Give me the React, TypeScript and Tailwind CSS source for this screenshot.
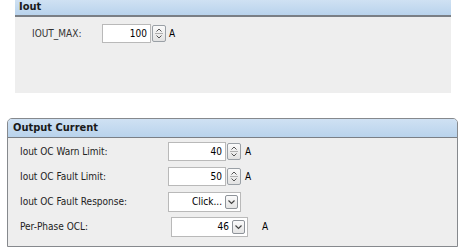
import React from "react";

function Spinner() {
    return (
        <div className="w-[14px] h-[17px] border border-[#9aa0a6] rounded-[2px] bg-gradient-to-b from-[#fafafa] to-[#e2e2e2] flex flex-col items-center justify-center ml-[1px]">
            <svg width="10" height="15" viewBox="0 0 10 15">
                <path d="M2.5 5.5 L5 3 L7.5 5.5" fill="none" stroke="#555" strokeWidth="1" />
                <line x1="1" y1="7.5" x2="9" y2="7.5" stroke="#b0b0b0" strokeWidth="1" />
                <path d="M2.5 9.5 L5 12 L7.5 9.5" fill="none" stroke="#555" strokeWidth="1" />
            </svg>
        </div>
    );
}

function DropButton() {
    return (
        <div className="w-[13px] h-[14px] border border-[#8e9399] rounded-[2px] bg-gradient-to-b from-[#fbfbfb] to-[#e4e4e4] flex items-center justify-center">
            <svg width="9" height="8" viewBox="0 0 9 8">
                <path d="M1.5 2.5 L4.5 5.5 L7.5 2.5" fill="none" stroke="#444" strokeWidth="1.2" />
            </svg>
        </div>
    );
}

function SpinBox({ value, width }: { value: string; width: string }) {
    return (
        <div className="flex items-center">
            <div className={`${width} h-[19px] bg-white border border-[#b9b9b9] flex items-center justify-end pr-[3px] text-[10px] text-black`}>
                {value}
            </div>
            <Spinner />
        </div>
    );
}

function ComboBox({ value, width }: { value: string; width: string }) {
    return (
        <div className={`${width} h-[20px] bg-white border border-[#b9b9b9] flex items-center justify-end gap-[3px] pr-[2px] text-[10px] text-black`}>
            <span>{value}</span>
            <DropButton />
        </div>
    );
}

function Row({ label, children }: { label: string; children: React.ReactNode }) {
    return (
        <div className="flex items-center h-[25px]">
            <div className="w-[160px] pl-[12px] text-[10px] text-[#222]">{label}</div>
            {children}
        </div>
    );
}

export default function App() {
    return (
        <div className="w-[474px] h-[249px] bg-white font-['DejaVu_Sans_Condensed','DejaVu_Sans',sans-serif] overflow-hidden">
            <div className="ml-[15px] w-[436px] h-[93px] bg-[#eeeeee] flex flex-col">
                <div className="h-[17px] bg-gradient-to-b from-[#cfe1f3] to-[#b9d3ec] border-b-2 border-[#7a7f85] flex items-center pl-[4px] text-[11px] font-bold text-[#1a1a1a]">
                    Iout
                </div>
                <div className="flex items-center mt-[7px] h-[19px]">
                    <div className="w-[87px] pl-[17px] text-[10px] text-[#333]">IOUT_MAX:</div>
                    <SpinBox value="100" width="w-[49px]" />
                    <span className="ml-[3px] text-[10px] text-black">A</span>
                </div>
            </div>

            <div className="mt-[25px] ml-[7px] w-[451px] h-[129px] bg-[#eeeeee] border border-[#86898d] rounded-t-[5px] flex flex-col">
                <div className="h-[19px] bg-gradient-to-b from-[#cfe1f3] to-[#b9d3ec] border-b border-[#7a7f85] rounded-t-[4px] flex items-center pl-[5px] text-[11px] font-bold text-[#1a1a1a]">
                    Output Current
                </div>
                <div className="flex flex-col pt-[1px]">
                    <Row label="Iout OC Warn Limit:">
                        <SpinBox value="40" width="w-[58px]" />
                        <span className="ml-[4px] text-[10px] text-black">A</span>
                    </Row>
                    <Row label="Iout OC Fault Limit:">
                        <SpinBox value="50" width="w-[58px]" />
                        <span className="ml-[4px] text-[10px] text-black">A</span>
                    </Row>
                    <Row label="Iout OC Fault Response:">
                        <ComboBox value="Click..." width="w-[73px]" />
                    </Row>
                    <Row label="Per-Phase OCL:">
                        <div className="ml-[3px]">
                            <ComboBox value="46" width="w-[77px]" />
                        </div>
                        <span className="ml-[14px] text-[10px] text-black">A</span>
                    </Row>
                </div>
            </div>
        </div>
    );
}
